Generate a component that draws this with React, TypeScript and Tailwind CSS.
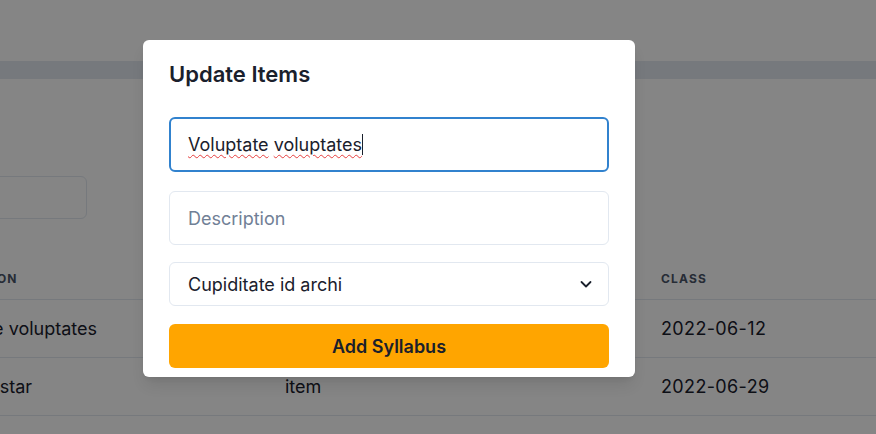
import React from "react";

const rows = [
  { desc: "Voluptate voluptates", item: "", cls: "2022-06-12" },
  { desc: "Dolorem star", item: "item", cls: "2022-06-29" },
  { desc: "Neque sit amet", item: "item", cls: "2022-07-03" },
];

export default function App() {
  return (
    <div
      className="relative w-[876px] h-[434px] overflow-hidden bg-white text-[#1a202c]"
      style={{ fontFamily: "Inter, 'Noto Sans', sans-serif" }}
    >
      {/* underlying page */}
      <div className="pt-[61px]">
        <div className="h-[18px] w-full bg-[#e2e8f0]" />
        <div className="ml-[-101px] w-[1100px]">
          <div className="mt-[97px] h-[43px] w-[188px] rounded-md border border-[#e2e8f0]" />
          <div className="mt-[40px]">
            <div className="flex h-[41px] items-center border-b border-[#e2e8f0] text-[12px] font-bold uppercase tracking-widest text-[#4a5568]">
              <div className="w-[362px] px-6">Description</div>
              <div className="w-[376px] px-6" />
              <div className="px-6">Class</div>
            </div>
            {rows.map((r) => (
              <div
                key={r.cls}
                className="flex h-[58px] items-center border-b border-[#e2e8f0] text-[18px] text-[#1a202c]"
              >
                <div className="w-[362px] px-6">{r.desc}</div>
                <div className="w-[376px] px-6">{r.item}</div>
                <div className="px-6 tracking-[0.02em]">{r.cls}</div>
              </div>
            ))}
          </div>
        </div>
      </div>

      {/* overlay */}
      <div className="absolute inset-0 bg-black/[0.48]">
        <div className="ml-[143px] mt-[40px] w-[492px] rounded-md bg-white px-[26px] pt-[19px] pb-[9px] shadow-lg">
          <h2 className="text-[22px] font-semibold leading-[30px] text-[#1a202c]">Update Items</h2>

          <div className="mt-[28px] flex h-[55px] items-center rounded-md border-2 border-[#3182ce] pl-[17px] text-[18px] text-[#1a202c]">
            <span className="underline decoration-wavy decoration-[#e53e3e] decoration-1 underline-offset-[3px]">Voluptate</span>
            <span>&nbsp;</span>
            <span className="underline decoration-wavy decoration-[#e53e3e] decoration-1 underline-offset-[3px]">voluptates</span>
            <span className="inline-block h-[21px] w-[1px] bg-[#1a202c]" />
          </div>

          <div className="mt-[19px] flex h-[54px] items-center rounded-md border border-[#e2e8f0] pl-[18px] text-[18px] text-[#718096]">
            Description
          </div>

          <div className="mt-[17px] flex h-[44px] items-center justify-between rounded-md border border-[#e2e8f0] pl-[18px] pr-[15px] text-[18px] text-[#1a202c]">
            <span>Cupiditate id archi</span>
            <svg width="14" height="14" viewBox="0 0 14 14" fill="none" stroke="#1a202c" strokeWidth="1.8" strokeLinecap="round" strokeLinejoin="round">
              <path d="M2.5 5l4.5 4.5 4.5-4.5" />
            </svg>
          </div>

          <button className="mt-[18px] flex h-[44px] w-full items-center justify-center rounded-md bg-[#ffa500] text-[18px] font-semibold text-[#1a202c]">
            Add Syllabus
          </button>
        </div>
      </div>
    </div>
  );
}
